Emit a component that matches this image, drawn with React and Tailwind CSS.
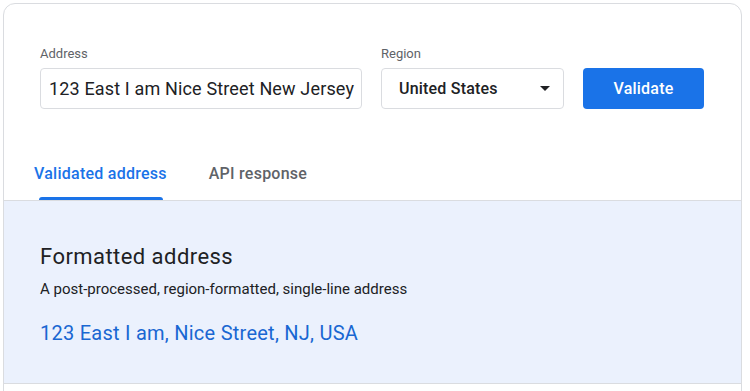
import React from 'react';

function App() {
  return (
    <div className="w-[750px] h-[391px] overflow-hidden bg-white" style={{ fontFamily: 'Roboto, "Liberation Sans", sans-serif' }}>
      <div className="ml-[3px] mt-[3px] w-[739px] h-[420px] border border-[#dadce0] rounded-t-[12px] overflow-hidden">
        {/* form row */}
        <div className="flex items-end gap-[19px] pl-[36px] pt-[42px]">
          <div className="flex flex-col">
            <label className="text-[13px] leading-[16px] text-[#5f6368] mb-[6px]">Address</label>
            <div className="w-[322px] h-[41px] border border-[#dadce0] rounded-[4px] flex items-center pl-[8px] text-[18px] tracking-[0.15px] text-[#202124] overflow-hidden whitespace-nowrap">
              123 East I am Nice Street New Jersey
            </div>
          </div>
          <div className="flex flex-col">
            <label className="text-[13px] leading-[16px] text-[#5f6368] mb-[6px]">Region</label>
            <div className="w-[183px] h-[41px] border border-[#dadce0] rounded-[4px] flex items-center justify-between pl-[17px] pr-[13px] text-[16px] tracking-[0.2px] font-medium text-[#202124]">
              <span>United States</span>
              <svg width="10" height="5" viewBox="0 0 10 5"><path d="M0 0L5 5L10 0Z" fill="#202124" /></svg>
            </div>
          </div>
          <button className="w-[121px] h-[41px] rounded-[4px] bg-[#1a73e8] text-white text-[16px] tracking-[0.2px] font-medium">
            Validate
          </button>
        </div>

        {/* tabs */}
        <div className="flex mt-[39px] pl-[30px] gap-[42px] border-b border-[#dadce0] h-[53px]">
          <div className="relative flex items-center pb-[1px] text-[16px] tracking-[0.25px] font-medium text-[#1a73e8]">
            Validated address
            <span className="absolute left-[5px] right-[4px] bottom-0 h-[3px] rounded-t-[3px] bg-[#1a73e8]" />
          </div>
          <div className="flex items-center pb-[1px] text-[16px] tracking-[0.25px] font-medium text-[#5f6368]">API response</div>
        </div>

        {/* result panel */}
        <div className="bg-[#ebf1fd] h-[183px] border-b border-[#dadce0] pl-[36px] pt-[42px]">
          <h2 className="text-[22px] leading-[28px] tracking-[0.45px] text-[#202124]">Formatted address</h2>
          <p className="text-[15px] leading-[20px] text-[#202124] mt-[8px]">A post-processed, region-formatted, single-line address</p>
          <p className="text-[20px] leading-[26px] tracking-[0.25px] text-[#1967d2] mt-[21px]">123 East I am, Nice Street, NJ, USA</p>
        </div>
      </div>
    </div>
  );
}

export default App;
